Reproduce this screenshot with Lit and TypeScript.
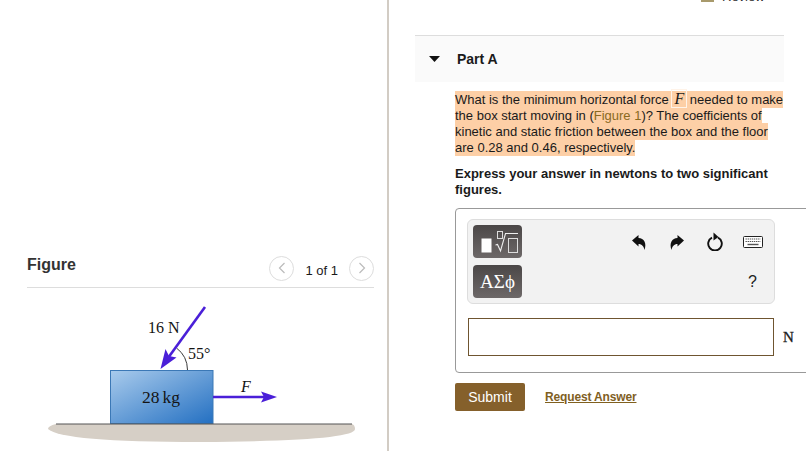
import { LitElement, html, css, svg } from 'lit';
import { customElement } from 'lit/decorators.js';

const VIOLET = '#4a1fd8';

const diagram = svg`
  <defs>
    <linearGradient id="box" x1="0" y1="0" x2="1" y2="1">
      <stop offset="0" stop-color="#a9cbec"/>
      <stop offset="1" stop-color="#2470c2"/>
    </linearGradient>
  </defs>
  <path d="M56 136 Q48 138 48 141 Q62 154 200 154 Q355 153 355 141 Q355 137 352 136Z" fill="#d6cfc6"/>
  <rect x="110.5" y="82.5" width="102.5" height="53" fill="url(#box)" stroke="#3b78b6"/>
  <line x1="56" y1="136" x2="352" y2="136" stroke="#555" stroke-width="1.2"/>
  <path d="M176.5 60 A28 28 0 0 1 187.5 82" fill="none" stroke="#222" stroke-width="0.9"/>
  <line x1="205" y1="19" x2="168" y2="70" stroke="${VIOLET}" stroke-width="2.6"/>
  <path d="M160.5 81 L165.5 61 L169 68 L176.5 69.5Z" fill="${VIOLET}"/>
  <line x1="213" y1="109" x2="264" y2="109" stroke="${VIOLET}" stroke-width="2.6"/>
  <path d="M277 109 L261 103.5 L264 109 L261 114.5Z" fill="${VIOLET}"/>
  <text x="148" y="45" class="t">16 N</text>
  <text x="188" y="71" class="t">55°</text>
  <text x="142" y="115" class="t mass">28 kg</text>
  <text x="241" y="104" class="t it">F</text>
`;

@customElement('app-root')
class AppRoot extends LitElement {
  static styles = css`
    :host {
      display: block;
      width: 806px;
      height: 451px;
      overflow: hidden;
      background: #fff;
      font-family: 'Liberation Sans', Arial, sans-serif;
      color: #1a1a1a;
    }
    .page {
      display: flex;
      height: 451px;
    }
    .left {
      flex: 0 0 387px;
      border-right: 2px solid #d2ccc4;
      padding-top: 250px;
      box-sizing: content-box;
    }
    .fig-head {
      display: flex;
      align-items: center;
      height: 38px;
      margin: 0 13px 0 27px;
      border-bottom: 1px solid #ddd;
      box-sizing: border-box;
    }
    .fig-title {
      font-size: 16px;
      font-weight: bold;
      color: #333;
      margin-right: auto;
      position: relative;
      top: -4px;
    }
    .pager {
      display: flex;
      align-items: center;
      gap: 11px;
      font-size: 13px;
      margin-top: -1px;
    }
    .count {
      margin-top: 4px;
    }
    .round {
      width: 25px;
      height: 25px;
      border: 1px solid #ddd;
      border-radius: 50%;
      box-sizing: border-box;
      display: flex;
      align-items: center;
      justify-content: center;
    }
    .diagram {
      display: block;
    }
    .t {
      font-family: 'Liberation Serif', serif;
      font-size: 16px;
      fill: #141414;
    }
    .mass {
      font-size: 17.5px;
      word-spacing: -1.5px;
    }
    .it {
      font-style: italic;
    }
    .right {
      flex: 1;
      min-width: 0;
      padding-left: 26px;
    }
    .review {
      display: flex;
      align-items: center;
      gap: 8px;
      height: 12px;
      margin: -10px 0 0 286px;
      font-size: 13px;
      color: #333;
    }
    .review i {
      display: block;
      width: 13px;
      height: 12px;
      background: #a89a6c;
    }
    .part {
      display: flex;
      align-items: center;
      width: 369px;
      height: 47px;
      margin-top: 33px;
      border-top: 1px solid #ddd;
      background: #fafafa;
      box-sizing: border-box;
      font-size: 14px;
      font-weight: bold;
    }
    .part svg {
      margin: 0 17px 0 14px;
    }
    .body {
      padding: 10px 0 0 40px;
    }
    .question {
      width: 332px;
      margin: 0;
      font-size: 13px;
      line-height: 16px;
    }
    .mark {
      background: #fdcfa6;
      padding: 1px 0;
    }
    .link {
      color: #8a6a1f;
    }
    .var {
      font-family: 'Liberation Serif', serif;
      font-style: italic;
      font-size: 16px;
      line-height: 12px;
      outline: 1px solid #fff3e8;
      padding: 0 2px;
    }
    .express {
      width: 332px;
      margin: 10px 0 0;
      font-size: 13px;
      font-weight: bold;
      line-height: 16px;
    }
    .answer {
      width: 370px;
      height: 165px;
      margin-top: 10px;
      padding: 10px 0 0 11px;
      border: 1px solid #999;
      border-radius: 4px;
      box-sizing: border-box;
    }
    .tools {
      display: grid;
      grid-template-columns: 49px 1fr;
      row-gap: 7px;
      width: 308px;
      height: 85px;
      padding: 5px;
      background: #f2f2f2;
      border: 1px solid #ddd;
      border-radius: 6px;
      box-sizing: border-box;
    }
    .key {
      display: flex;
      align-items: center;
      justify-content: center;
      height: 33px;
      border-radius: 4px;
      background: linear-gradient(#4b4747, #6d6868);
      color: #fff;
      font-family: 'Liberation Serif', serif;
      font-size: 19px;
    }
    .acts {
      display: flex;
      align-items: center;
      justify-content: flex-end;
      margin-right: -2.5px;
    }
    .acts span {
      display: flex;
      justify-content: center;
      width: 38px;
    }
    .help {
      font-size: 16px;
      color: #222;
      padding-top: 1px;
    }
    .entry {
      display: flex;
      align-items: center;
      margin: 14px 0 0 1px;
    }
    .entry .box {
      width: 306px;
      height: 38px;
      border: 1px solid #6f5530;
      box-sizing: border-box;
    }
    .entry b {
      margin-left: 9px;
      font-family: 'Liberation Serif', serif;
      font-size: 15px;
      font-weight: normal;
      -webkit-text-stroke: 0.3px #222;
    }
    .actions {
      display: flex;
      align-items: center;
      gap: 20px;
      margin-top: 10px;
    }
    .submit {
      width: 70px;
      height: 28px;
      border: 0;
      border-radius: 2px;
      background: #85602b;
      color: #fff;
      font: 14px 'Liberation Sans', Arial, sans-serif;
    }
    .request {
      font-size: 12px;
      font-weight: bold;
      letter-spacing: -0.15px;
      color: #80601f;
      text-decoration: underline;
    }
  `;

  render() {
    return html`
      <div class="page">
        <section class="left">
          <div class="fig-head">
            <span class="fig-title">Figure</span>
            <div class="pager">
              <span class="round">
                <svg width="8" height="12" viewBox="0 0 8 12"><path d="M6.5 1 L1.5 6 L6.5 11" fill="none" stroke="#bbb" stroke-width="1.2"/></svg>
              </span>
              <span class="count">1 of 1</span>
              <span class="round">
                <svg width="8" height="12" viewBox="0 0 8 12"><path d="M1.5 1 L6.5 6 L1.5 11" fill="none" stroke="#bbb" stroke-width="1.2"/></svg>
              </span>
            </div>
          </div>
          <svg class="diagram" width="387" height="163" viewBox="0 0 387 163">${diagram}</svg>
        </section>
        <section class="right">
          <div class="review"><i></i><span>Review</span></div>
          <div class="part">
            <svg width="11" height="6" viewBox="0 0 11 6"><path d="M0 0H11L5.5 6Z" fill="#111"/></svg>
            Part A
          </div>
          <div class="body">
            <p class="question">
              <span class="mark">What is the minimum horizontal force <span class="var">F</span> needed to make the box start moving in (<span class="link">Figure 1</span>)? The coefficients of kinetic and static friction between the box and the floor are 0.28 and 0.46, respectively.</span>
            </p>
            <p class="express">Express your answer in newtons to two significant figures.</p>
            <div class="answer">
              <div class="tools">
                <div class="key">
                  <svg width="40" height="28" viewBox="0 0 40 28">
                    <rect x="3.5" y="10.5" width="10" height="14" fill="#fff"/>
                    <rect x="19.5" y="3.5" width="5" height="7" fill="none" stroke="#ddd"/>
                    <path d="M17.5 17 L19.5 16.5 L22.5 23 L27.5 5.5 H40" fill="none" stroke="#eee" stroke-width="1.1"/>
                    <rect x="30.5" y="10.5" width="9" height="14" fill="none" stroke="#ddd"/>
                  </svg>
                </div>
                <div class="acts">
                  <span><svg width="16" height="17" viewBox="0 0 16 17" style="margin-top:1px"><path d="M1 6.5 L7.5 1 V4 C13 4 16 9 13.5 16 C12.8 12.5 11 10 7.5 10 V12.5Z" fill="#111"/></svg></span>
                  <span><svg width="16" height="17" viewBox="0 0 16 17" style="margin-top:1px"><path d="M15 6.5 L8.5 1 V4 C3 4 0 9 2.5 16 C3.2 12.5 5 10 8.5 10 V12.5Z" fill="#111"/></svg></span>
                  <span><svg width="18" height="19" viewBox="0 0 18 19"><path d="M6 5.6 A6.8 6.8 0 1 0 12 5.6" fill="none" stroke="#111" stroke-width="1.9"/><path d="M7.5 0.5 L12.5 5 L7.5 8.5Z" fill="#111"/></svg></span>
                  <span><svg width="20" height="12" viewBox="0 0 20 12"><rect x="0.5" y="0.5" width="19" height="11" rx="1" fill="#fff" stroke="#222"/><path d="M2.5 3H17.5M2.5 5.5H17.5" stroke="#555" stroke-width="1.2" stroke-dasharray="1.4 .7"/><path d="M4.5 8.5H15.5" stroke="#555" stroke-width="1.4"/></svg></span>
                </div>
                <div class="key">ΑΣϕ</div>
                <div class="acts">
                  <span class="help">?</span>
                </div>
              </div>
              <div class="entry">
                <div class="box"></div>
                <b>N</b>
              </div>
            </div>
            <div class="actions">
              <button class="submit">Submit</button>
              <span class="request">Request Answer</span>
            </div>
          </div>
        </section>
      </div>
    `;
  }
}

declare global {
  interface HTMLElementTagNameMap {
    'app-root': AppRoot;
  }
}
